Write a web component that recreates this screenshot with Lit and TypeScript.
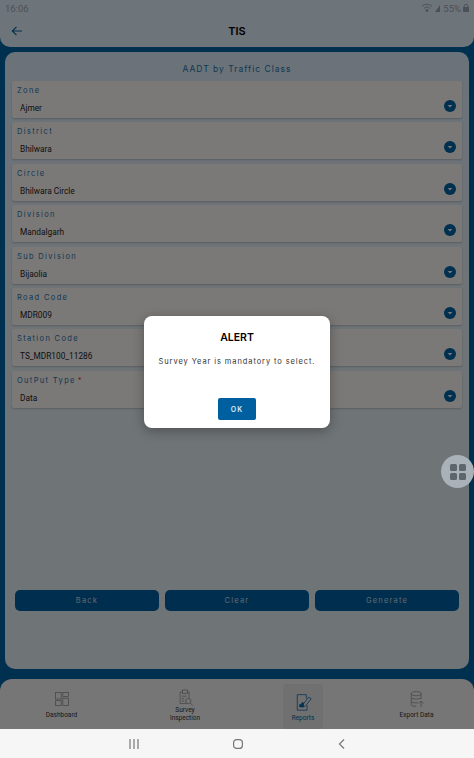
import { LitElement, html, css, svg } from 'lit';
import { customElement } from 'lit/decorators.js';

const FIELDS = [
  ['Zone', 'Ajmer'],
  ['District', 'Bhilwara'],
  ['Circle', 'Bhilwara Circle'],
  ['Division', 'Mandalgarh'],
  ['Sub Division', 'Bijaolia'],
  ['Road Code', 'MDR009'],
  ['Station Code', 'TS_MDR100_11286'],
  ['OutPut Type', 'Data'],
];

const NAV_ICONS = {
  dashboard: svg`<rect x="3" y="3" width="7" height="8"/><rect x="12" y="3" width="7" height="5"/><rect x="3" y="13" width="7" height="6"/><rect x="12" y="10" width="7" height="9"/>`,
  survey: svg`<path d="M5 5h3M14 5h2v8M5 5v14h8"/><rect x="8" y="2.5" width="6" height="4"/><path d="M7 10h6M7 13h3M7 16h3"/><circle cx="15" cy="16" r="3.2"/><path d="M17.4 18.4l3 3"/>`,
  reports: svg`<path d="M15 7V2H4v19h12v-6"/><path d="M11 14l7-9 3 2-7 9-3.5 1z"/><path d="M7 17v-3h2v3zM9.5 17v-5h2v5z" fill="currentColor"/>`,
  export: svg`<ellipse cx="10" cy="4.5" rx="6" ry="2.5"/><path d="M4 4.5V18c0 1 2 2 6 2M16 4.5V11M4 9.5c1 2 11 2 12 0M4 14c1 1.6 5 2 8 1.6"/><path d="M16 21v-7M13 16.5l3-3 3 3"/>`,
};

const NAV = [
  ['Dashboard', 'dashboard', false],
  ['Survey\nInspection', 'survey', false],
  ['Reports', 'reports', true],
  ['Export Data', 'export', false],
] as const;

@customElement('app-root')
export class AppRoot extends LitElement {
  static styles = css`
    :host {
      display: flex;
      flex-direction: column;
      width: 474px;
      height: 758px;
      overflow: hidden;
      font-family: Inter, "Liberation Sans", sans-serif;
    }
    .screen {
      position: relative;
      height: 729px;
      display: flex;
      flex-direction: column;
      background: #00609f;
    }
    .header {
      height: 47px;
      box-sizing: border-box;
      padding: 2px 5px 0 5px;
      border-radius: 0 0 10px 10px;
      background: #dbe9f5;
    }
    .status {
      display: flex;
      align-items: center;
      justify-content: space-between;
      height: 12px;
      font: 9.5px Roboto, sans-serif;
      color: #98a2ac;
    }
    .status-right {
      display: flex;
      align-items: center;
      gap: 2px;
    }
    .titlebar {
      display: flex;
      align-items: center;
      justify-content: center;
      position: relative;
      height: 30px;
      margin-top: 2px;
      font: 600 11px Inter, sans-serif;
      color: #000;
    }
    .back {
      position: absolute;
      left: 6px;
      top: 9px;
      color: #00609f;
    }
    .panel {
      flex: 1;
      display: flex;
      flex-direction: column;
      margin: 5px 5px 10px;
      padding: 0 7px 58px;
      border-radius: 10px;
      background: linear-gradient(#d6e6f4, #dfe8ef 240px);
    }
    .panel-title {
      height: 29px;
      line-height: 34px;
      text-align: center;
      font-size: 8.5px;
      font-weight: 400;
      letter-spacing: 1px;
      color: #1f6ea6;
    }
    .fields {
      display: flex;
      flex-direction: column;
      gap: 4.4px;
      flex: 1;
    }
    .field {
      position: relative;
      height: 37px;
      box-sizing: border-box;
      padding: 5px 5px 0;
      border-radius: 2px;
      background: #f6f3ef;
      box-shadow: 0 1px 2px rgba(0, 0, 0, 0.2);
    }
    .label {
      font-size: 7.5px;
      line-height: 10px;
      letter-spacing: 1.35px;
      color: #1f6ea6;
    }
    .star {
      margin-left: 2px;
      color: #d33;
    }
    .value {
      margin: 6px 0 0 3px;
      font: 8.3px/12px Roboto, sans-serif;
      color: #222;
    }
    .chev {
      position: absolute;
      right: 6px;
      top: 19px;
      width: 12px;
      height: 12px;
    }
    .actions {
      display: grid;
      grid-template-columns: repeat(3, 144px);
      gap: 6px;
      padding: 0 3px;
    }
    .actions button {
      height: 21px;
      border: 0;
      border-radius: 5px;
      padding: 0;
      background: #005c9e;
      font: 400 7.5px Inter, sans-serif;
      letter-spacing: 1.2px;
      color: #c4d2dc;
    }
    .tabs {
      height: 50px;
      display: grid;
      grid-template-columns: 123px 124px 112px 115px;
      border-radius: 12px 12px 0 0;
      background: #ececec;
    }
    .tab {
      display: flex;
      flex-direction: column;
      align-items: center;
      justify-content: flex-end;
      padding-bottom: 10px;
      font: 400 6.5px/7.5px Roboto, sans-serif;
      text-align: center;
      white-space: pre-line;
      color: #333;
    }
    .tab svg {
      width: 18px;
      height: 18px;
      margin-bottom: 4px;
      fill: none;
      stroke: currentColor;
      stroke-width: 0.9;
      color: #888;
    }
    .tab.on {
      justify-self: center;
      width: 40px;
      margin-top: 5px;
      border-radius: 4px;
      padding-bottom: 7px;
      background: #e0e0e2;
      color: #00609f;
    }
    .tab.on svg {
      color: #00609f;
    }
    .tab.two svg {
      margin-bottom: 1px;
    }
    .tab.two {
      padding-bottom: 7px;
    }
    .overlay {
      position: absolute;
      inset: 0;
      display: flex;
      justify-content: center;
      align-items: flex-start;
      padding-top: 316px;
      box-sizing: border-box;
      background: rgba(0, 0, 0, 0.5);
    }
    .modal {
      width: 186px;
      height: 112px;
      box-sizing: border-box;
      padding-top: 15px;
      display: flex;
      flex-direction: column;
      align-items: center;
      border-radius: 8px;
      background: #fff;
      box-shadow: 0 3px 12px rgba(0, 0, 0, 0.3);
    }
    .modal h2 {
      margin: 0;
      font: 600 10.5px/13px Inter, sans-serif;
      color: #000;
    }
    .modal p {
      margin: 13px 0 0;
      font-size: 7.5px;
      line-height: 10px;
      letter-spacing: 0.9px;
      white-space: nowrap;
      color: #333;
    }
    .modal button {
      width: 38px;
      height: 22px;
      margin-top: 31px;
      padding: 0;
      border: 0;
      border-radius: 2px;
      background: #00609f;
      font: 600 7px Inter, sans-serif;
      letter-spacing: 1.2px;
      color: #dcebf6;
    }
    .fab {
      position: absolute;
      left: 441px;
      top: 455px;
      width: 33px;
      height: 33px;
      display: grid;
      grid-template-columns: 7px 7px;
      grid-auto-rows: 7px;
      gap: 2px;
      place-content: center;
      border-radius: 50%;
      background: #aab2b9;
    }
    .fab i {
      border-radius: 1.5px;
      background: #5e666d;
    }
    .sysnav {
      flex: 1;
      display: flex;
      align-items: center;
      background: #f6f6f6;
      color: #777;
    }
    .sysnav svg {
      fill: none;
      stroke: currentColor;
      stroke-width: 1.2;
    }
    .sysnav .i1 { margin-left: 129px; }
    .sysnav .i2 { margin-left: 94px; }
    .sysnav .i3 { margin-left: 95px; }
  `;

  render() {
    return html`
      <div class="screen">
        <div class="header">
          <div class="status">
            <span>16:06</span>
            <span class="status-right">
              <svg width="20" height="10" viewBox="0 0 20 10" fill="none" stroke="currentColor">
                <path d="M1 3.5c3-3 7-3 10 0M3 5.5c2-2 4-2 6 0"/>
                <circle cx="6" cy="7.5" r="1" fill="currentColor"/>
                <path d="M14 9l5-7v7z" fill="currentColor" stroke="none"/>
              </svg>
              <span>55%</span>
              <svg width="6" height="8" viewBox="0 0 6 8">
                <path d="M0 3.5h6V8H0zM1.2 3.5V2a1.8 1.8 0 0 1 3.6 0v1.5" fill="none" stroke="currentColor"/>
                <rect y="3.5" width="6" height="4.5" fill="currentColor"/>
              </svg>
            </span>
          </div>
          <div class="titlebar">
            <svg class="back" width="12" height="12" viewBox="0 0 12 12" fill="none" stroke="currentColor" stroke-width="1.1">
              <path d="M11 6H1.5M5.5 1.8L1.3 6l4.2 4.2"/>
            </svg>
            TIS
          </div>
        </div>
        <div class="panel">
          <div class="panel-title">AADT by Traffic Class</div>
          <div class="fields">
            ${FIELDS.map(
              ([label, value]) => html`
                <div class="field">
                  <div class="label">${label}${label === 'OutPut Type' ? html`<span class="star">*</span>` : ''}</div>
                  <div class="value">${value}</div>
                  <svg class="chev" viewBox="0 0 12 12">
                    <circle cx="6" cy="6" r="6" fill="#00609f"/>
                    <path d="M3.6 5h4.8L6 7.6z" fill="#e8f0f6"/>
                  </svg>
                </div>
              `,
            )}
          </div>
          <div class="actions">
            <button>Back</button>
            <button>Clear</button>
            <button>Generate</button>
          </div>
        </div>
        <div class="tabs">
          ${NAV.map(
            ([label, icon, on]) => html`
              <div class="tab ${on ? 'on' : ''} ${label.includes('\n') ? 'two' : ''}">
                <svg viewBox="0 0 22 22">${NAV_ICONS[icon]}</svg>
                ${label}
              </div>
            `,
          )}
        </div>
        <div class="overlay">
          <div class="modal">
            <h2>ALERT</h2>
            <p>Survey Year is mandatory to select.</p>
            <button>OK</button>
          </div>
        </div>
        <div class="fab"><i></i><i></i><i></i><i></i></div>
      </div>
      <div class="sysnav">
        <svg class="i1" width="10" height="10" viewBox="0 0 10 10"><path d="M1 0v10M5 0v10M9 0v10"/></svg>
        <svg class="i2" width="10" height="10" viewBox="0 0 10 10"><rect x="0.6" y="0.6" width="8.8" height="8.8" rx="3"/></svg>
        <svg class="i3" width="7" height="10" viewBox="0 0 7 10"><path d="M6 0.5L1.5 5 6 9.5"/></svg>
      </div>
    `;
  }
}
